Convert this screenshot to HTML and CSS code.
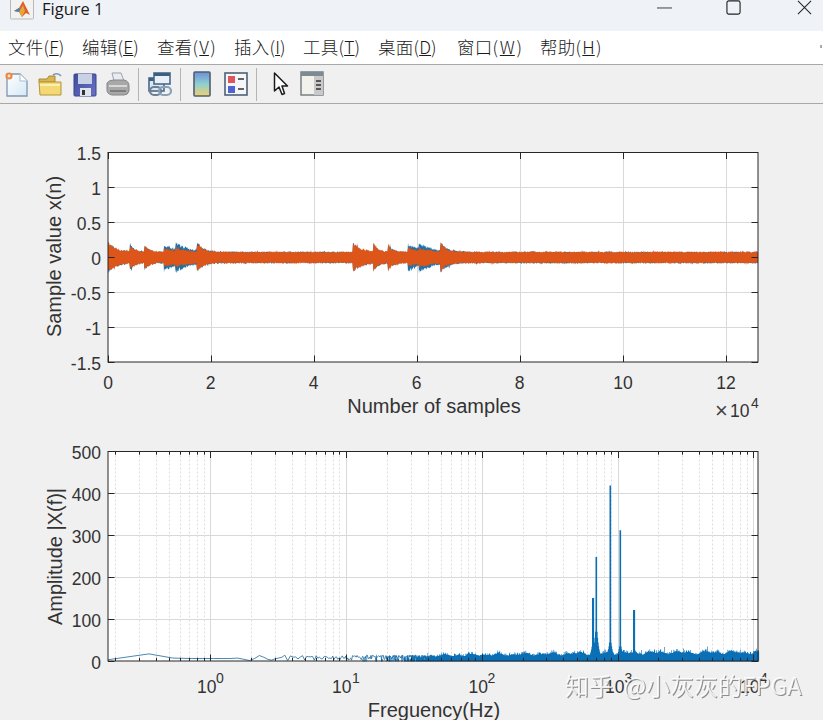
FILE: index.html
```html
<!DOCTYPE html>
<html lang="zh-CN">
<head>
<meta charset="utf-8">
<title>Figure 1</title>
<link rel="stylesheet" href="styles.css">
</head>
<body>
<header class="titlebar">
  <svg class="app-icon" viewBox="0 0 24 20">
    <rect x="0.5" y="-3" width="23" height="22" rx="1" fill="#f2f2f2" stroke="#b9b9b9"/>
    <path d="M4 11 L9 8 L13 1 L20 15 L16 13 L12 17 L9 12 Z" fill="#d9622b"/>
    <path d="M4 11 L9 8 L11 12 L9 12 Z" fill="#3f87b8"/>
    <path d="M9 12 L13 5 L15 11 L12 17 Z" fill="#e8a53a"/>
  </svg>
  <span class="title">Figure 1</span>
  <div class="winbtns">
    <svg class="winbtn" viewBox="0 0 16 16"><path d="M0 8.5 H16" stroke="#333" fill="none"/></svg>
    <svg class="winbtn wb-max" viewBox="0 0 16 16"><rect x="1" y="1" width="14" height="14" rx="2" fill="none" stroke="#222" stroke-width="1.2"/></svg>
    <svg class="winbtn wb-close" viewBox="0 0 16 16"><path d="M1 1 L15 15 M15 1 L1 15" stroke="#222" stroke-width="1.1" fill="none"/></svg>
  </div>
</header>

<nav class="menubar">
  <span class="menu m1">文件(<u>F</u>)</span>
  <span class="menu m2">编辑(<u>E</u>)</span>
  <span class="menu m3">查看(<u>V</u>)</span>
  <span class="menu m4">插入(<u>I</u>)</span>
  <span class="menu m5">工具(<u>T</u>)</span>
  <span class="menu m6">桌面(<u>D</u>)</span>
  <span class="menu m7">窗口(<u>W</u>)</span>
  <span class="menu m8">帮助(<u>H</u>)</span>
  <span class="grip"></span>
</nav>

<div class="toolbar">
  <svg class="tool t-new" viewBox="0 0 24 26">
    <defs><linearGradient id="docg" x1="0" y1="0" x2="1" y2="1"><stop offset="0" stop-color="#ffffff"/><stop offset="1" stop-color="#d5e8f6"/></linearGradient></defs>
    <path d="M3 3 H16 L23 10 V25 H3 Z" fill="url(#docg)" stroke="#7d97b4" stroke-width="1.3"/>
    <path d="M16 3 V10 H23" fill="#fff" stroke="#a9bdd2"/>
    <circle cx="5" cy="5" r="3.6" fill="#e8894a"/><circle cx="5" cy="5" r="1.4" fill="#fbe3c8"/>
  </svg>
  <svg class="tool t-open" viewBox="0 0 24 26">
    <path d="M1 8 H9 L11 5 H17 V11 H1 Z" fill="#d9b64f" stroke="#a88a34"/>
    <path d="M15 4 Q20 1 23 5" fill="none" stroke="#7d97b4" stroke-width="1.6"/>
    <path d="M1 11 H23 V24 H2 Z" fill="#f3d873" stroke="#b4953a"/>
    <path d="M2 14 H22" stroke="#fbeeb0" stroke-width="2"/>
  </svg>
  <svg class="tool t-save" viewBox="0 0 24 26">
    <defs><linearGradient id="saveg" x1="0" y1="0" x2="1" y2="1"><stop offset="0" stop-color="#3f4aa0"/><stop offset="1" stop-color="#6a74c4"/></linearGradient></defs>
    <rect x="1" y="3" width="22" height="22" rx="1" fill="url(#saveg)" stroke="#3a4486"/>
    <rect x="5" y="3" width="14" height="10" fill="#c9d1e6"/>
    <rect x="7" y="17" width="11" height="8" fill="#dfe3ee"/><rect x="9" y="19" width="3" height="5" fill="#333"/>
  </svg>
  <svg class="tool t-print" viewBox="0 0 24 26">
    <path d="M6 2 H15 L18 10 H8 Z" fill="#e9edf2" stroke="#9aa3ac"/>
    <path d="M1 12 Q3 9 8 9 H18 Q23 10 23 15 V20 Q22 24 18 24 H6 Q1 23 1 19 Z" fill="#a8a8a8" stroke="#858585"/>
    <path d="M3 15 H21" stroke="#d8d8d8" stroke-width="2"/><path d="M4 20 H20" stroke="#707070" stroke-width="1.5"/>
  </svg>
  <span class="sep s1"></span>
  <svg class="tool t-link" viewBox="0 0 24 26">
    <rect x="1" y="7" width="15" height="13" fill="#dbe7f3" stroke="#4a6a8c" stroke-width="1.6"/>
    <rect x="1" y="7" width="15" height="3" fill="#3d5f82"/>
    <rect x="6" y="2" width="16" height="11" fill="#e9f0f7" stroke="#4a6a8c" stroke-width="1.6"/>
    <rect x="6" y="2" width="16" height="3" fill="#3d5f82"/>
    <rect x="2" y="16" width="11" height="8" rx="4" fill="none" stroke="#6d7f92" stroke-width="2.2"/>
    <rect x="11" y="16" width="12" height="8" rx="4" fill="none" stroke="#8aa0b6" stroke-width="2.2"/>
  </svg>
  <span class="sep s2"></span>
  <svg class="tool t-bar" viewBox="0 0 18 26">
    <defs><linearGradient id="cbar" x1="0" y1="0" x2="0" y2="1"><stop offset="0" stop-color="#6d8fd8"/><stop offset="0.5" stop-color="#8fcfd0"/><stop offset="1" stop-color="#f0d070"/></linearGradient></defs>
    <rect x="1" y="1" width="16" height="24" rx="1" fill="url(#cbar)" stroke="#4f5f72" stroke-width="1.6"/>
  </svg>
  <svg class="tool t-legend" viewBox="0 0 24 26">
    <rect x="1" y="2" width="22" height="22" fill="#f4f6fa" stroke="#4f6178" stroke-width="1.6"/>
    <rect x="4" y="5" width="7" height="7" fill="#e0555b"/><rect x="4" y="15" width="7" height="7" fill="#4e62d0"/>
    <path d="M14 8 H20 M14 18 H20" stroke="#333" stroke-width="1.6"/>
  </svg>
  <span class="sep s3"></span>
  <svg class="tool t-cursor" viewBox="0 0 16 26">
    <path d="M1.5 2 V20 L6 16 L9 23.5 L11.5 22.5 L9 15 H14.5 Z" fill="#fff" stroke="#1c1c1c" stroke-width="1.5" stroke-linejoin="round"/>
  </svg>
  <svg class="tool t-tools" viewBox="0 0 24 26">
    <rect x="1" y="1" width="22" height="23" fill="#f3f1ec" stroke="#6f777f" stroke-width="1.4"/>
    <rect x="1" y="1" width="22" height="4" fill="#7b8a93"/>
    <rect x="14" y="5" width="9" height="19" fill="#c9c9c9"/>
    <path d="M16 10 H21 M16 14 H21 M16 18 H21" stroke="#333" stroke-width="1.5"/>
  </svg>
</div>

<main class="figure">
  <svg class="canvas" viewBox="0 104 823 616">
    <rect class="axes-bg" x="108" y="152.5" width="650" height="209.5"/>
    <rect class="axes-bg" x="108" y="451.5" width="650" height="209.5"/>
    <g id="grid"></g>
    <path id="wave-blue" class="wave-blue"/>
    <path id="wave-orange" class="wave-orange"/>
    <path id="spectrum" class="spectrum"/>
    <path id="spectrum-fill" class="spectrum-fill"/>
    <g id="ticks"></g>
    <rect class="axes-box" x="108" y="152.5" width="650" height="209.5"/>
    <rect class="axes-box" x="108" y="451.5" width="650" height="209.5"/>

    <g class="ylabels">
      <text x="101" y="160">1.5</text>
      <text x="101" y="195">1</text>
      <text x="101" y="230">0.5</text>
      <text x="101" y="265">0</text>
      <text x="101" y="300">-0.5</text>
      <text x="101" y="335">-1</text>
      <text x="101" y="370">-1.5</text>
      <text x="101" y="459">500</text>
      <text x="101" y="501">400</text>
      <text x="101" y="543">300</text>
      <text x="101" y="585">200</text>
      <text x="101" y="627">100</text>
      <text x="101" y="669">0</text>
    </g>
    <g class="xlabels">
      <text x="108" y="388.5">0</text>
      <text x="210.5" y="388.5">2</text>
      <text x="313.5" y="388.5">4</text>
      <text x="416.5" y="388.5">6</text>
      <text x="519.5" y="388.5">8</text>
      <text x="623" y="388.5">10</text>
      <text x="726" y="388.5">12</text>
    </g>
    <text class="axis-title" x="434" y="412.5">Number of samples</text>
    <text class="axis-title" x="434" y="717">Freguency(Hz)</text>
    <text class="times" x="715" y="418">×</text>
    <text class="tick-text" x="730" y="417">10</text>
    <text class="tick-sup" x="751" y="408">4</text>
    <text class="tick-text" x="197" y="692.5">10</text>
    <text class="tick-sup" x="216" y="683">0</text>
    <text class="tick-text" x="332" y="692.5">10</text>
    <text class="tick-sup" x="352" y="683">1</text>
    <text class="tick-text" x="468.5" y="692.5">10</text>
    <text class="tick-sup" x="487.5" y="683">2</text>
    <text class="tick-text" x="605" y="692.5">10</text>
    <text class="tick-sup" x="624.5" y="683">3</text>
    <text class="tick-text" x="740" y="692.5">10</text>
    <text class="tick-sup" x="760" y="683">4</text>
    <text class="axis-title" transform="translate(60.5 256.5) rotate(-90)">Sample value x(n)</text>
    <text class="axis-title" transform="translate(61.5 556.5) rotate(-90)">Amplitude |X(f)|</text>
    <text class="watermark" x="565" y="695">知乎 @小灰灰的FPGA</text>
  </svg>
</main>
<script src="plot.js"></script>
</body>
</html>
```
FILE: styles.css
```css
* { box-sizing: border-box; }
html, body { margin: 0; height: 720px; overflow: hidden; }
body { background: #f0f0f0; font-family: "Noto Sans", "Noto Sans CJK SC", sans-serif; color: #1a1a1a; }

.titlebar { height: 31px; background: #eff3f7; display: flex; align-items: flex-start; padding-left: 10px; }
.app-icon { width: 24px; height: 20px; flex: none; filter: blur(0.4px); }
.title { margin-left: 8px; font-size: 16.5px; line-height: 18px; font-family: "Open Sans", "Noto Sans", sans-serif; }
.winbtns { margin-left: auto; display: flex; padding: 0 11px 0 0; }
.winbtn { width: 15px; height: 15px; display: block; }
.wb-max { margin-left: 54px; }
.wb-close { margin-left: 56px; }

.menubar { height: 34px; background: #fff; border-bottom: 1px solid #a8a8a8; display: flex; align-items: center; gap: 18px; padding: 0 1px 2px 8px; font-size: 17.5px; line-height: 31px; font-family: "Noto Sans CJK SC", "Noto Sans", sans-serif; font-weight: 300; }
.menu { flex: none; white-space: nowrap; letter-spacing: 0.2px; }
.m1 { width: 56px; } .m2 { width: 57px; } .m3 { width: 59px; } .m4 { width: 51px; }
.m5 { width: 57px; } .m6 { width: 61px; } .m7 { width: 65px; } .m8 { width: 61px; }
.m3 u, .m8 u { margin: 0 1.2px; letter-spacing: 0; }
.m7 u { margin: 0 1.7px; letter-spacing: 0; }
.grip { margin-left: auto; width: 2px; height: 3px; background: #aaa; filter: blur(0.5px); }

.toolbar { height: 39px; background: #f0f0f0; border-bottom: 1px solid #a8a8a8; display: flex; align-items: center; padding-left: 4px; }
.tool { width: 24px; height: 26px; flex: none; display: block; filter: blur(0.4px); }
.t-open { margin-left: 10px; } .t-save { margin-left: 11px; } .t-print { margin-left: 9px; }
.t-link { margin-left: 9px; } .t-bar { width: 18px; margin-left: 12px; } .t-legend { margin-left: 13px; }
.t-cursor { width: 16px; margin-left: 16px; } .t-tools { margin-left: 11px; }
.sep { width: 1px; height: 33px; background: #b4b4b4; margin-left: 8px; flex: none; }

.figure { height: 616px; }
.canvas { width: 823px; height: 616px; display: block; font-family: "Liberation Sans", Arial, sans-serif; }
.axes-bg { fill: #fff; }
.axes-box { fill: none; stroke: #262626; stroke-width: 1; }
.grid { stroke: #d9d9d9; stroke-width: 1; fill: none; }
.grid-minor { stroke: #dddddd; stroke-width: 1; stroke-dasharray: 2 2; fill: none; }
.tick { stroke: #262626; stroke-width: 1; fill: none; }
.wave-blue { fill: #1f72a8; }
.wave-orange { fill: #dd5518; }
.spectrum { fill: none; stroke: #1a6a9e; stroke-width: 0.8; }
.spectrum-fill { fill: #0a6fb5; }
.ylabels text { font-size: 17.5px; text-anchor: end; fill: #333; }
.xlabels text { font-size: 17.5px; text-anchor: middle; fill: #333; }
.tick-text { font-size: 17.5px; fill: #333; }
.times { font-size: 22px; font-weight: 400; fill: #444; }
.tick-sup { font-size: 14px; fill: #333; }
.axis-title { font-size: 20px; text-anchor: middle; fill: #333; }
.watermark { font-family: "Noto Sans CJK SC", sans-serif; font-size: 24px; word-spacing: 5px; fill: rgba(255,255,255,0.82); filter: drop-shadow(1px 1px 0.6px rgba(90,90,90,0.8)); }
```
FILE: plot.js
```js
(function () {
  var NS = "http://www.w3.org/2000/svg";
  var seed = 12345;
  function rnd() { seed = (seed * 16807) % 2147483647; return seed / 2147483647; }
  function snap(v) { return Math.floor(v) + 0.5; }
  function line(parent, cls, x1, y1, x2, y2) {
    var l = document.createElementNS(NS, "line");
    l.setAttribute("class", cls);
    l.setAttribute("x1", x1); l.setAttribute("y1", y1);
    l.setAttribute("x2", x2); l.setAttribute("y2", y2);
    parent.appendChild(l);
  }
  var grid = document.getElementById("grid");
  var ticks = document.getElementById("ticks");
  var L = 108, R = 758;

  /* upper axes: grid and ticks */
  var T1 = 152.5, B1 = 362;
  var i, y, x;
  for (i = 0; i <= 6; i++) {
    y = snap(T1 + i * (B1 - T1) / 6);
    if (i > 0 && i < 6) line(grid, "grid", L, y, R, y);
    line(ticks, "tick", L, y, L + 6.5, y);
    line(ticks, "tick", R - 6.5, y, R, y);
  }
  for (i = 0; i <= 12; i += 2) {
    x = snap(L + i * 51.55);
    if (i > 0) line(grid, "grid", x, T1, x, B1);
    line(ticks, "tick", x, B1 - 6.5, x, B1);
    line(ticks, "tick", x, T1, x, T1 + 6.5);
  }

  /* lower axes: log grid */
  var T2 = 451.5, B2 = 661, DEC = 135.9, X0 = 210.3;
  for (i = 0; i <= 5; i++) {
    y = snap(T2 + i * (B2 - T2) / 5);
    if (i > 0 && i < 5) line(grid, "grid", L, y, R, y);
    line(ticks, "tick", L, y, L + 6.5, y);
    line(ticks, "tick", R - 6.5, y, R, y);
  }
  for (var d = -1; d <= 4; d++) {
    for (var m = 1; m <= 9; m++) {
      x = snap(X0 + DEC * (d + Math.log10(m)));
      if (x <= L || x >= R) continue;
      line(grid, m === 1 ? "grid" : "grid-minor", x, T2, x, B2);
      var len = m === 1 ? 6.5 : 3.2;
      line(ticks, "tick", x, B2 - len, x, B2);
      line(ticks, "tick", x, T2, x, T2 + len);
    }
  }

  /* waveform: envelope per burst, position in units of 1e4 samples */
  var shape = [
    [0.0, 0.13, 0.16], [0.42, 0.11, 0.08], [0.7, 0.11, 0.08], [1.08, 0.12, 0.25], [1.3, 0.09, 0.25], [1.72, 0.12, 0.1]
  ];
  var bursts = [];
  shape.forEach(function (b, j) { bursts.push([b[0], b[1], b[2], j === 3 || j === 4]); });
  shape.forEach(function (b, j) { bursts.push([b[0] + 4.75 - (j === 0 ? 0 : 0.02), b[1], b[2], j === 3 || j === 4]); });
  function env(s, gain) {
    var e = 0.08;
    for (var j = 0; j < bursts.length; j++) {
      var b = bursts[j];
      if (s >= b[0]) {
        e += (b[3] ? b[1] * gain : b[1]) * Math.exp(-(s - b[0]) / b[2]);
      }
    }
    return Math.min(e, 0.21);
  }
  var PX = 51.55;
  function amp(e) {
    var v = e * (0.82 + 0.3 * rnd());
    if (rnd() < 0.03) v *= 1.22;
    return v;
  }
  function wave(gain, scale) {
    var up = "", down = [];
    for (var px = L; px <= R; px += 0.5) {
      var e = env((px - L) / PX, gain) * scale;
      up += (up ? "L" : "M") + px.toFixed(1) + " " + (257.5 - amp(e) * 70).toFixed(1);
      down.push("L" + px.toFixed(1) + " " + (257.5 + amp(e) * 70).toFixed(1));
    }
    return up + down.reverse().join("") + "Z";
  }
  document.getElementById("wave-blue").setAttribute("d", wave(1.0, 0.98));
  document.getElementById("wave-orange").setAttribute("d", wave(0.42, 1));

  /* spectrum: bins are spaced evenly in frequency, so they crowd on the log axis */
  var low = [3, 17, 7, 6, 6, 6, 6, 6, 7, 4, 1, 6, 13, 9, 4, 2];
  var peaks = [[592.7, 150, 60], [596, 248, 110], [610, 419, 70], [620, 312, 55], [633.7, 122, 25]];
  function yOf(v) { return B2 - v * 0.419; }
  function xOf(k) { return L + DEC * Math.log10(k); }
  var path = "", fill = "";
  for (var k = 1; k <= 3000; k++) {
    x = xOf(k);
    if (x > 430) break;
    var v = k <= low.length ? low[k - 1] : Math.pow(rnd(), 0.6) * 14;
    path += (path ? "L" : "M") + x.toFixed(2) + " " + yOf(v).toFixed(2);
  }
  /* past the point where bins overlap, draw one solid column per half pixel */
  for (var c = 360; c <= R + 0.5; c += 0.5) {
    if (rnd() > (c - 360) / 60) continue;
    var h = 13 + 11 * Math.min(1, (c - 360) / 300);
    var a = h * (0.8 + 0.4 * rnd() * rnd()) * (1 + 0.22 * Math.sin(c * 0.35) * Math.sin(c * 0.11));
    if (c < 430) a *= 0.3 + 0.7 * rnd();
    if (rnd() < 0.03) a += 5;
    for (var p = 0; p < peaks.length; p++) {
      var dx = Math.abs(c - peaks[p][0]);
      if (dx <= 0.9) a = Math.max(a, peaks[p][1]);
      a = Math.max(a, peaks[p][2] * Math.exp(-dx / 2.2));
    }
    fill += "M" + c.toFixed(1) + " " + (B2 + 0.5) + "V" + yOf(a).toFixed(1) + "h0.62V" + (B2 + 0.5) + "Z";
  }
  document.getElementById("spectrum").setAttribute("d", path);
  document.getElementById("spectrum-fill").setAttribute("d", fill);
})();
```
